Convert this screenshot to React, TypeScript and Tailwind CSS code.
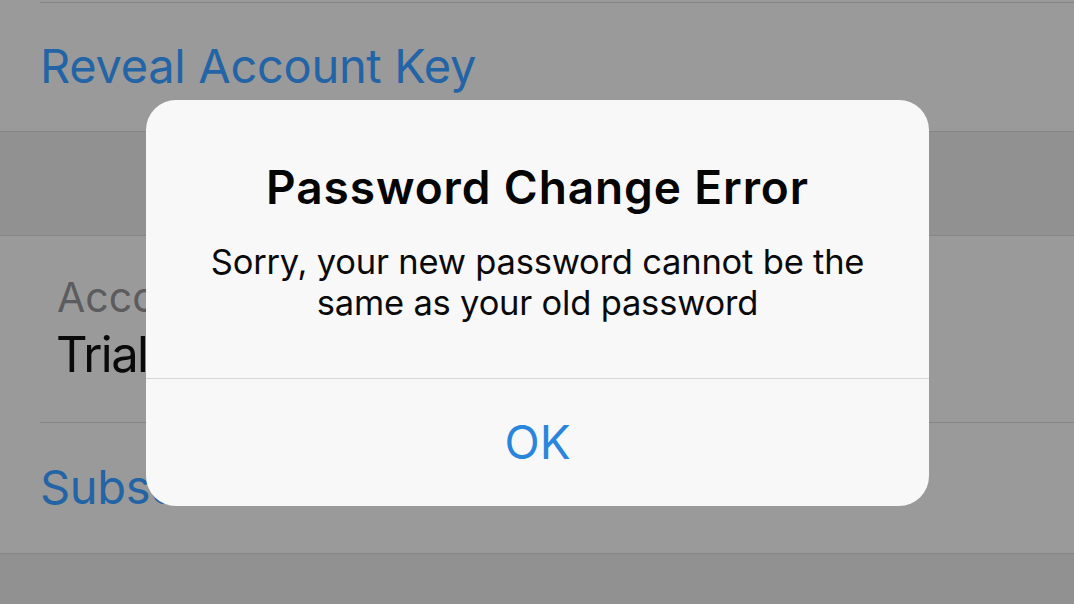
export default function App() {
  const font = { fontFamily: 'Inter, "Noto Sans", sans-serif' };
  return (
    <div className="relative w-[1074px] h-[604px] overflow-hidden bg-[#919192]" style={font}>
      {/* background settings list, dimmed */}
      <div className="flex flex-col">
        <div className="h-[131px] bg-[#9a9a9a] flex flex-col">
          <div className="h-[2px]" />
          <div className="ml-[40px] h-[1px] bg-[#868686]" />
          <div className="pl-[40px] pt-[33px] text-[47px] leading-[60px] text-[#2364a6] tracking-[-0.3px]">
            Reveal Account Key
          </div>
        </div>
        <div className="h-[1px] bg-[#868686]" />
        <div className="h-[103px]" />
        <div className="h-[1px] bg-[#868686]" />
        <div className="h-[317px] bg-[#9a9a9a] flex flex-col">
          <div className="pl-[57px] pt-[38px] text-[41px] leading-[46px] text-[#5c5c5e]">Account Type</div>
          <div className="pl-[56px] pt-[6px] text-[49px] leading-[58px] text-[#0a0a0a] tracking-[-1.6px]">Trial Period</div>
          <div className="h-[38px]" />
          <div className="ml-[40px] h-[1px] bg-[#868686]" />
          <div className="pl-[40px] pt-[34px] text-[47px] leading-[60px] text-[#2364a6] tracking-[-0.3px]">
            Subscribe
          </div>
        </div>
        <div className="h-[1px] bg-[#868686]" />
      </div>

      {/* alert */}
      <div className="absolute left-[146px] top-[100px] w-[783px] h-[406px] rounded-[30px] bg-[#f8f8f9] flex flex-col">
        <div className="h-[278px] flex flex-col items-center">
          <div className="pt-[60px] text-[46px] leading-[54px] font-semibold text-[#050505] tracking-[0.9px]">
            Password Change Error
          </div>
          <div className="pt-[27px] text-[34.5px] leading-[41px] text-[#0a0a0a] text-center tracking-[-0.2px]">
            Sorry, your new password cannot be the
            <br />
            same as your old password
          </div>
        </div>
        <div className="h-[1px] bg-[#d6d6d9]" />
        <div className="flex-1 flex items-center justify-center pb-[2px]">
          <span className="text-[46px] leading-[56px] text-[#2a86dc]">OK</span>
        </div>
      </div>
    </div>
  );
}
